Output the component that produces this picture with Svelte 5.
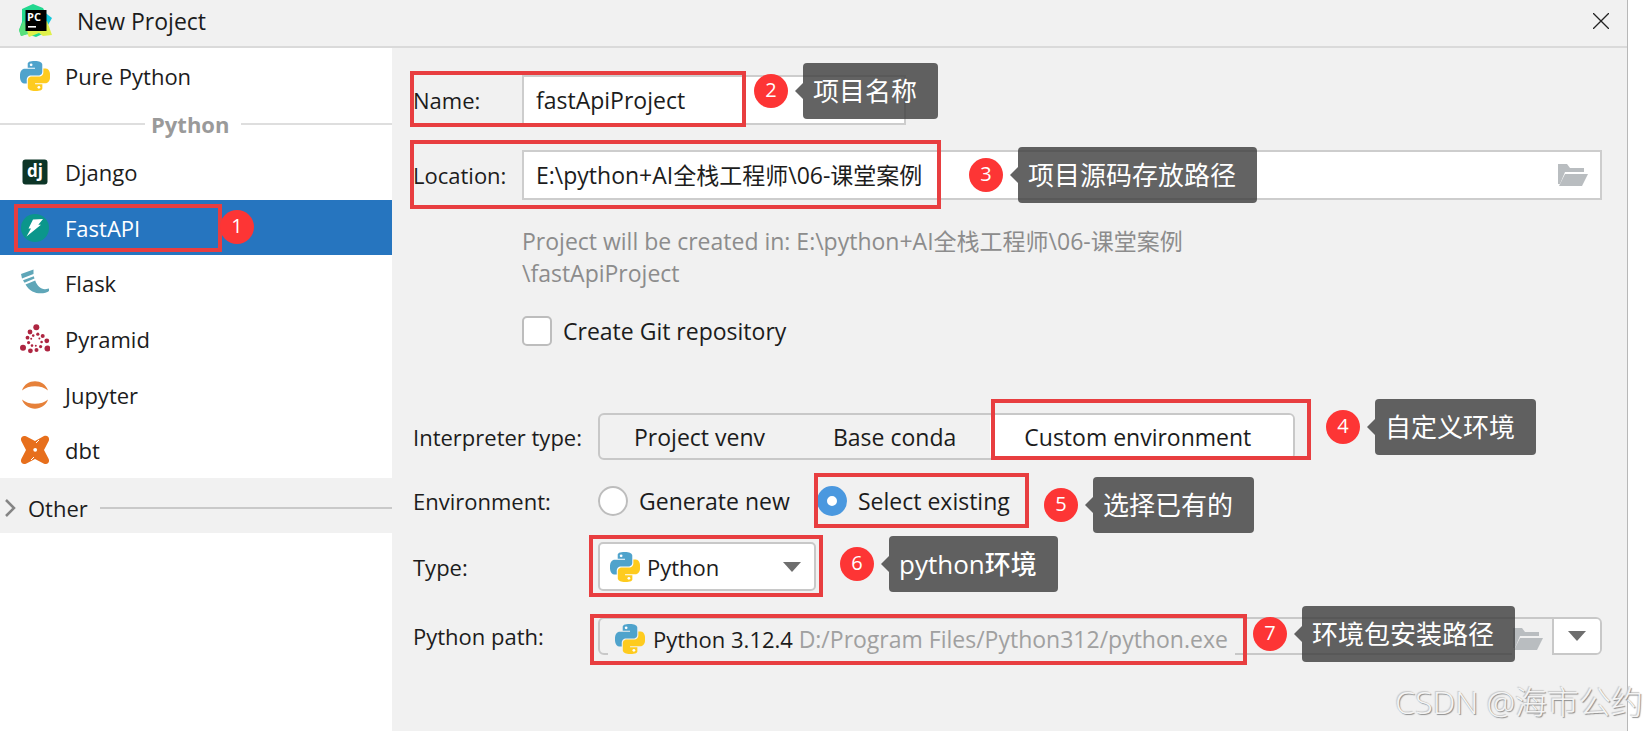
<script>
  const frameworks = ['Django', 'FastAPI', 'Flask', 'Pyramid', 'Jupyter', 'dbt'];
  const interpreterTypes = ['Project venv', 'Base conda', 'Custom environment'];

  const pyramidDots = [
    [16.3, 3.3, 3], [10, 8, 2.4], [7.5, 13.7, 1.9], [8.6, 18.6, 1.6], [12, 21.6, 1.3],
    [3, 23.7, 3], [10.4, 26.8, 2.4], [16.5, 26, 2], [20.6, 22.6, 1.6], [21.6, 18, 1.3],
    [27.5, 24.6, 3], [26.8, 16.8, 2.4], [22.7, 12, 2], [17.8, 10.2, 1.6], [13.2, 11.6, 1.3],
    [11.2, 14.8, 1], [15.8, 21.8, 1], [19.4, 14.6, 1]
  ];

  let framework = $state('FastAPI');
  let interpreter = $state('Custom environment');
  let environment = $state('existing');
  let name = $state('fastApiProject');
  let location = $state('E:\\python+AI全栈工程师\\06-课堂案例');
  let git = $state(false);
</script>

{#snippet pythonIcon()}
  <svg class="icon" viewBox="0 0 24 24" aria-hidden="true">
    <path fill="#4fa3cc" d="M14.25.18l.9.2.73.26.59.3.45.32.34.34.25.34.16.33.1.3.04.26.02.2-.01.13V8.5l-.05.63-.13.55-.21.46-.26.38-.3.31-.33.25-.35.19-.35.14-.33.1-.3.07-.26.04-.21.02H8.77l-.69.05-.59.14-.5.22-.41.27-.33.32-.27.35-.2.36-.15.37-.1.35-.07.32-.04.27-.02.21v3.06H3.17l-.21-.03-.28-.07-.32-.12-.35-.18-.36-.26-.36-.36-.35-.46-.32-.59-.28-.73-.21-.88-.14-1.05-.05-1.23.06-1.22.16-1.04.24-.87.32-.71.36-.57.4-.44.42-.33.42-.24.4-.16.36-.1.32-.05.24-.01h.16l.06.01h8.16v-.83H6.18l-.01-2.75-.02-.37.05-.34.11-.31.17-.28.25-.26.31-.23.38-.2.44-.18.51-.15.58-.12.64-.1.71-.06.77-.04.84-.02 1.27.05z" />
    <path fill="#fecb1e" d="M21.1 6.11l.28.06.32.12.35.18.36.27.36.35.35.47.32.59.28.73.21.88.14 1.04.05 1.23-.06 1.23-.16 1.04-.24.86-.32.71-.36.57-.4.45-.42.33-.42.24-.4.16-.36.09-.32.05-.24.02-.16-.01h-8.22v.82h5.84l.01 2.76.02.36-.05.34-.11.31-.17.29-.25.25-.31.24-.38.2-.44.17-.51.15-.58.13-.64.09-.71.07-.77.04-.84.01-1.27-.04-1.07-.14-.9-.2-.73-.25-.59-.3-.45-.33-.34-.34-.25-.34-.16-.33-.1-.3-.04-.25-.02-.2.01-.13v-5.34l.05-.64.13-.54.21-.46.26-.38.3-.32.33-.24.35-.2.35-.14.33-.1.3-.06.26-.04.21-.02.13-.01h5.84l.69-.05.59-.14.5-.21.41-.28.33-.32.27-.35.2-.36.15-.36.1-.35.07-.32.04-.28.02-.21V6.07h2.09l.14.01z" />
    <circle cx="8.9" cy="3" r="1.1" fill="#fff" />
    <circle cx="15.1" cy="21" r="1.1" fill="#fff" />
  </svg>
{/snippet}

{#snippet folderIcon()}
  <svg class="folder" viewBox="0 0 32 24" aria-hidden="true">
    <path fill="#b9bdc0" d="M1 21V1h9l3 4h14v4H8L3 21z" />
    <path fill="#b9bdc0" d="M8 11h23l-6 12H2z" />
  </svg>
{/snippet}

{#snippet frameworkIcon(id)}
  <svg class="icon" viewBox="0 0 30 30" aria-hidden="true">
    {#if id === 'Django'}
      <rect x="2.5" y="2.5" width="25" height="25" rx="3" fill="#0c3527" />
      <text x="15" y="19.5" text-anchor="middle" font-size="17" font-weight="700" fill="#fff">dj</text>
    {:else if id === 'FastAPI'}
      <circle cx="15" cy="15" r="14" fill="#0b968b" />
      <path fill="#fff" d="M13 6.500L23 6L18.300 11.800H21L6.500 23.500L11 15.500H8.500z" />
    {:else if id === 'Flask'}
      <g fill="#5fa6b8">
        <path d="M1 6L13.500 1.500V6L2 10.500z" />
        <path d="M3 12.300L13.800 8.200L14.500 10.500L4.500 14.800z" />
        <path d="M5.500 16.500L15.200 12.600C17 18 20.500 21 25 21.300L29 20.600V23C25 26 12 28 5.500 16.500z" />
      </g>
    {:else if id === 'Pyramid'}
      {#each pyramidDots as [cx, cy, r]}
        <circle {cx} {cy} {r} fill="#ae2541" />
      {/each}
    {:else if id === 'Jupyter'}
      <path fill="#e6813a" d="M2 10.500C6-1.700 24-1.700 28 10.500C22 4.800 8 4.800 2 10.500z" />
      <path fill="#e6813a" d="M2 19.500C6 31.700 24 31.700 28 19.500C22 25.200 8 25.200 2 19.500z" />
    {:else}
      <path fill="#e76f1c" d="M6 1.200L15 6L24 1C27.500-.3 30 2.500 28.700 6L24 15L28.700 24C30 27.500 27.500 30 24 28.700L15 24L6 28.700C2.500 30 0 27.500 1.300 24L6 15L1.300 6C0 2.500 2.500 0 6 1.200z" />
      <circle cx="15.200" cy="14.800" r="1.900" fill="#fff" />
      <path stroke="#fff" d="M16 8l3-3M14 22l-3 3" />
    {/if}
  </svg>
{/snippet}

{#snippet mark(step, tip)}
  <div class="mark mark-{step}">
    <div class="callout">
      <span class="badge">{step}</span>
      {#if tip}<span class="tip">{tip}</span>{/if}
    </div>
  </div>
{/snippet}

<div class="page">
  <div class="window">
    <header>
      <svg class="app-icon" viewBox="0 0 34 34" aria-hidden="true">
        <path fill="#22d88f" d="M3 5L14 0L24 4L28 12V28L17 33L8 30L2 32L0 26L3 18z" />
        <path fill="#14c9dc" d="M24 7L33 14L29 21L24 19z" />
        <path fill="#dff04a" d="M28 17L33 31L24 32L20 29L10 33L7 27z" />
        <path fill="#58e07c" d="M0 26L5 16L9 30L2 32z" />
        <rect x="6.500" y="6" width="21" height="21" />
        <text x="8" y="16.500" font-size="11" font-weight="700" fill="#fff">PC</text>
        <path fill="#fff" d="M9 22h8v1.600H9z" />
      </svg>
      <h1>New Project</h1>
      <button class="close" aria-label="Close">
        <svg viewBox="0 0 16 16" aria-hidden="true"><path d="M0 0L16 16M16 0L0 16" stroke="#222" stroke-width="1.300" /></svg>
      </button>
    </header>

    <div class="body">
      <aside>
        <button class="item first">{@render pythonIcon()}Pure Python</button>
        <h2>Python</h2>
        <ul>
          {#each frameworks as id}
            <li>
              <button class="item" class:selected={framework === id} onclick={() => (framework = id)}>
                {@render frameworkIcon(id)}{id}
              </button>
              {#if id === 'FastAPI'}{@render mark(1, '')}{/if}
            </li>
          {/each}
        </ul>
        <button class="other">
          <svg viewBox="0 0 12 20" aria-hidden="true"><path d="M2 2L10 10L2 18" fill="none" stroke="#858585" stroke-width="2.500" /></svg>
          Other
        </button>
      </aside>

      <main>
        <div class="row">
          <label for="name">Name:</label>
          <input id="name" class="field name" bind:value={name} />
          {@render mark(2, '项目名称')}
        </div>
        <div class="row">
          <label for="location">Location:</label>
          <div class="field location">
            <input id="location" bind:value={location} />
            <button aria-label="Browse location">{@render folderIcon()}</button>
          </div>
          {@render mark(3, '项目源码存放路径')}
        </div>
        <p>Project will be created in: {location}<br />\{name}</p>
        <label class="git"><input type="checkbox" bind:checked={git} />Create Git repository</label>

        <div class="environment">
          <div class="row wide">
            <span class="label" id="interpreter-label">Interpreter type:</span>
            <div class="segments" role="group" aria-labelledby="interpreter-label">
              {#each interpreterTypes as type}
                <button aria-pressed={interpreter === type} onclick={() => (interpreter = type)}>{type}</button>
              {/each}
            </div>
            {@render mark(4, '自定义环境')}
          </div>
          <div class="row wide">
            <span class="label">Environment:</span>
            <label class="radio first-radio"><input type="radio" name="env" value="new" bind:group={environment} />Generate new</label>
            <label class="radio"><input type="radio" name="env" value="existing" bind:group={environment} />Select existing</label>
            {@render mark(5, '选择已有的')}
          </div>
          <div class="row wide">
            <label for="type">Type:</label>
            <div class="select">
              {@render pythonIcon()}
              <select id="type"><option>Python</option></select>
              <span class="arrow"></span>
            </div>
            {@render mark(6, 'python环境')}
          </div>
          <div class="row wide">
            <label for="path">Python path:</label>
            <div class="combo">
              <button id="path" class="value">{@render pythonIcon()}<span>Python 3.12.4 <em>D:/Program Files/Python312/python.exe</em></span></button>
              <button class="browse" aria-label="Browse interpreter">{@render folderIcon()}</button>
              <button class="open" aria-label="Show interpreters"><span class="arrow"></span></button>
            </div>
            {@render mark(7, '环境包安装路径')}
          </div>
        </div>
      </main>
    </div>
  </div>
  <div class="watermark">CSDN @海市公约</div>
</div>

<style>
  :global(body) {
    margin: 0;
    background: #fff;
  }
  .page {
    position: relative;
    box-sizing: border-box;
    min-height: 100vh;
    padding-right: 17px;
    display: flex;
    overflow: hidden;
    font: 22px/30px 'Open Sans', 'Noto Sans CJK SC', sans-serif;
    color: #1c1c1c;
  }
  .page * {
    box-sizing: border-box;
  }
  button,
  input,
  select {
    font: inherit;
    color: inherit;
    margin: 0;
    padding: 0;
    border: 0;
    background: none;
    white-space: nowrap;
  }
  .window {
    flex: 1;
    min-width: 0;
    display: flex;
    flex-direction: column;
    background: #f1f1f1;
    border-right: 1px solid #b8b8b8;
  }
  header {
    display: flex;
    align-items: center;
    height: 48px;
    padding: 0 18px 4px 19px;
    border-bottom: 2px solid #dadada;
  }
  .app-icon {
    width: 34px;
    height: 34px;
    margin-right: 24px;
  }
  h1 {
    flex: 1;
    margin: 0;
    font-size: 23px;
    font-weight: 400;
  }
  .close svg {
    display: block;
    width: 16px;
    height: 16px;
  }
  .body {
    flex: 1;
    display: flex;
  }
  .icon {
    flex: none;
    width: 30px;
    height: 30px;
  }

  aside {
    width: 392px;
    flex: none;
    background: #fff;
  }
  .item {
    display: flex;
    align-items: center;
    gap: 15px;
    width: 100%;
    height: 100%;
    padding: 0 0 0 20px;
  }
  .item.first {
    height: 56px;
  }
  .selected {
    background: #2675bf;
    color: #fff;
  }
  h2 {
    display: flex;
    align-items: center;
    height: 40px;
    margin: 0;
    font-size: 22px;
    font-weight: 700;
    color: #9a9a9a;
  }
  h2::before,
  h2::after,
  .other::after {
    content: '';
    flex: 1;
    height: 2px;
    background: #dedede;
  }
  h2::before {
    flex: 0 0 37%;
    margin-right: 6px;
  }
  h2::after {
    margin-left: 12px;
  }
  ul {
    display: flex;
    flex-direction: column;
    height: 334px;
    margin: 0;
    padding: 0;
    list-style: none;
  }
  li {
    position: relative;
    flex: 1;
  }
  .other {
    display: flex;
    align-items: center;
    gap: 12px;
    width: 100%;
    height: 55px;
    padding: 4px 0 0 4px;
    background: #f1f1f1;
  }
  .other svg {
    width: 12px;
    height: 20px;
  }
  .other::after {
    background: #c9c9c9;
  }

  main {
    flex: 1;
    min-width: 0;
    display: flex;
    flex-direction: column;
    gap: 25px;
    padding: 27px 25px 0 21px;
  }
  .row {
    position: relative;
    display: flex;
    align-items: center;
  }
  .row > :first-child {
    flex: none;
    width: 109px;
  }
  .wide > :first-child {
    width: 185px;
  }
  .field,
  p,
  .git,
  .radio,
  .segments,
  em {
    font-size: 23px;
  }
  .field {
    height: 50px;
    background: #fff;
    border: 2px solid #cdcdcd;
    padding-left: 12px;
  }
  .name {
    width: 384px;
  }
  .location {
    flex: 1;
    display: flex;
    align-items: center;
    padding-right: 11px;
  }
  .location input {
    flex: 1;
  }
  .folder {
    display: block;
    width: 32px;
    height: 24px;
  }
  p {
    margin: 0 0 0 109px;
    line-height: 32px;
    color: #8c8c8c;
  }
  .git {
    display: flex;
    align-items: center;
    gap: 11px;
    height: 30px;
    margin: 2px 0 0 109px;
  }
  input[type='checkbox'],
  input[type='radio'] {
    appearance: none;
    width: 30px;
    height: 30px;
    background: #fff;
    border: 2px solid #bdbdbd;
    border-radius: 5px;
  }
  input[type='radio'] {
    border-radius: 50%;
  }
  input[type='radio']:checked {
    border: 10px solid #4a98df;
  }
  .environment {
    display: flex;
    flex-direction: column;
    gap: 26px;
    margin-top: 42px;
  }
  .segments {
    display: flex;
    height: 47px;
    border: 2px solid #c8c8c8;
    border-radius: 6px;
  }
  .segments button {
    padding: 0 34px;
    border-radius: 4px;
  }
  .segments button[aria-pressed='true'] {
    background: #fff;
    padding-right: 42px;
  }
  .radio {
    display: flex;
    align-items: center;
    gap: 11px;
  }
  .first-radio {
    width: 219px;
  }
  .select {
    display: flex;
    align-items: center;
    position: relative;
    width: 218px;
    height: 49px;
    padding: 0 13px 0 10px;
    background: #fff;
    border: 2px solid #c8c8c8;
    border-radius: 5px;
  }
  select {
    appearance: none;
    flex: 1;
    padding-left: 7px;
  }
  .arrow {
    border: solid transparent;
    border-width: 10px 9px 0;
    border-top-color: #6e6e6e;
  }
  .combo {
    flex: 1;
    display: flex;
    align-items: flex-start;
    height: 38px;
    border: 2px solid #c8c8c8;
    border-radius: 6px;
  }
  .value {
    display: flex;
    align-items: center;
    gap: 8px;
    height: 40px;
    margin-left: 8px;
    padding: 0 7px;
    background: #f1f1f1;
  }
  em {
    font-style: normal;
    color: #a0a0a0;
  }
  .browse {
    margin-left: auto;
    padding: 8px 8px 4px 0;
    background: #f1f1f1;
  }
  .open {
    display: flex;
    align-items: center;
    justify-content: center;
    width: 48px;
    height: 34px;
    background: #fff;
    border-left: 2px solid #c8c8c8;
    border-radius: 0 4px 4px 0;
  }

  /* Tutorial annotations, laid over the dialog */
  .mark {
    position: absolute;
    border: 4px solid #e83e40;
    pointer-events: none;
  }
  .callout {
    position: absolute;
    left: 100%;
    display: flex;
    align-items: center;
    gap: 15px;
    height: 56px;
  }
  .badge {
    width: 34px;
    height: 34px;
    border-radius: 50%;
    background: #fd3535;
    color: #fff;
    font-size: 20px;
    line-height: 31px;
    text-align: center;
  }
  .tip {
    position: relative;
    height: 56px;
    padding: 0 21px 0 10px;
    border-radius: 4px;
    background: rgba(60, 60, 60, 0.8);
    color: #fff;
    font-size: 26px;
    line-height: 56px;
    white-space: nowrap;
  }
  .tip::before {
    content: '';
    position: absolute;
    right: 100%;
    top: 20px;
    border: solid transparent;
    border-width: 8px 8px 8px 0;
    border-right-color: rgba(60, 60, 60, 0.8);
  }
  .mark-1 { left: 14px; top: 4px; width: 208px; height: 48px; }
  .mark-1 .callout { top: -9px; margin-left: 2px; }
  .mark-2 { left: -3px; top: -4px; width: 336px; height: 56px; }
  .mark-2 .callout { top: -12px; margin-left: 12px; }
  .mark-3 { left: -3px; top: -10px; width: 531px; height: 69px; }
  .mark-3 .callout { top: 3px; margin-left: 32px; }
  .mark-4 { left: 578px; top: -14px; width: 320px; height: 61px; }
  .mark-4 .callout { top: -4px; margin-left: 19px; }
  .mark-5 { left: 401px; top: -13px; width: 215px; height: 55px; }
  .mark-5 .callout { top: 0; margin-left: 19px; }
  .mark-6 { left: 176px; top: -7px; width: 234px; height: 62px; }
  .mark-6 .callout { top: -3px; margin-left: 21px; }
  .mark-6 .tip { font-weight: 500; }
  .mark-7 { left: 177px; top: -3px; width: 657px; height: 51px; }
  .mark-7 .callout { top: -12px; margin-left: 10px; }

  .watermark {
    position: absolute;
    right: 2px;
    bottom: 6px;
    font-size: 32px;
    font-weight: 300;
    line-height: 46px;
    color: #f4f4f4;
    text-shadow: 1px 1px 1px #8c8c8c, -1px -1px 1px #c8c8c8;
    white-space: nowrap;
  }
</style>
